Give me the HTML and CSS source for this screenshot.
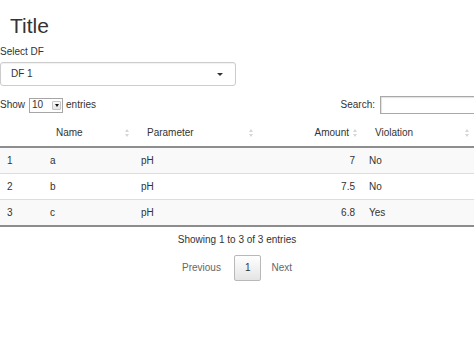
FILE: index.html
```html
<!DOCTYPE html>
<html lang="en">

<head>
	<meta charset="UTF-8">
	<meta name="viewport" content="width=device-width, initial-scale=1.0">
	<title>Title</title>
	<link rel="stylesheet" href="styles.css">
</head>

<body>
	<h2 class="title">Title</h2>

	<div class="form-group">
		<label class="control-label">Select DF</label>
		<div class="selectize">
			<span>DF 1</span>
			<span class="caret"></span>
		</div>
	</div>

	<div class="dt-wrapper">
		<div class="dt-controls">
			<div class="dt-length">
				Show
				<span class="length-select">
					<span class="length-value">10</span>
					<span class="length-arrow"></span>
				</span>
				entries
			</div>
			<div class="dt-filter">
				Search:
				<span class="search-input"></span>
			</div>
		</div>

		<table class="dt-table">
			<colgroup>
				<col class="col-rownum">
				<col class="col-name">
				<col class="col-param">
				<col class="col-amount">
				<col class="col-violation">
			</colgroup>
			<thead>
				<tr>
					<th></th>
					<th class="sorting">Name</th>
					<th class="sorting">Parameter</th>
					<th class="sorting num">Amount</th>
					<th class="sorting">Violation</th>
				</tr>
			</thead>
			<tbody>
				<tr class="odd">
					<td>1</td>
					<td>a</td>
					<td>pH</td>
					<td class="num">7</td>
					<td>No</td>
				</tr>
				<tr class="even">
					<td>2</td>
					<td>b</td>
					<td>pH</td>
					<td class="num">7.5</td>
					<td>No</td>
				</tr>
				<tr class="odd">
					<td>3</td>
					<td>c</td>
					<td>pH</td>
					<td class="num">6.8</td>
					<td>Yes</td>
				</tr>
			</tbody>
		</table>

		<div class="dt-info">Showing 1 to 3 of 3 entries</div>
		<div class="dt-paginate">
			<span class="page-btn disabled prev">Previous</span>
			<span class="page-btn current">1</span>
			<span class="page-btn disabled next">Next</span>
		</div>
	</div>
</body>

</html>
```

FILE: styles.css
```css
:root {
	--text: #333;
	--muted: #666;
	--border: #ccc;
	--row-line: #ddd;
	--stripe: #f9f9f9;
	--sort: #d6d6d6;
}

* {
	box-sizing: border-box;
}

html,
body {
	overflow: hidden;
}

body {
	margin: 0;
	padding: 0;
	font-family: 'Liberation Sans', Arial, sans-serif;
	font-size: 10px;
	line-height: 14px;
	color: var(--text);
	background: white;
}

.title {
	margin: 14px 0 8px 10px;
	font-size: 21px;
	font-weight: 400;
	line-height: 23px;
}

/* select input */
.form-group {
	margin-bottom: 10px;
}

.control-label {
	display: block;
	margin-bottom: 3px;
}

.selectize {
	display: flex;
	align-items: center;
	justify-content: space-between;
	width: 236px;
	height: 24px;
	padding: 0 12px 0 10px;
	border: 1px solid var(--border);
	border-radius: 3px;
	box-shadow: inset 0 1px 1px rgba(0, 0, 0, 0.06);
}

.caret {
	width: 0;
	height: 0;
	border-style: solid;
	border-width: 3.5px 3px 0 3px;
	border-color: #333 transparent transparent transparent;
}

/* table controls */
.dt-controls {
	display: flex;
	align-items: center;
	justify-content: space-between;
	height: 18px;
	margin-right: -20px;
}

.dt-length,
.dt-filter {
	display: flex;
	align-items: center;
	gap: 4px;
}

.dt-length {
	gap: 0;
}

.length-select {
	display: flex;
	align-items: center;
	justify-content: space-between;
	width: 34px;
	height: 15px;
	margin: 0 3px 0 4px;
	padding: 0 1px 0 2px;
	border: 1px solid #a6a6a6;
	background: white;
}

.length-arrow {
	position: relative;
	width: 9px;
	height: 9px;
	border: 1px solid #c4c4c4;
	border-radius: 1px;
	background: linear-gradient(#fafafa, #e4e4e4);
}

.length-arrow::after {
	content: "";
	position: absolute;
	left: 1.5px;
	top: 2.5px;
	border-style: solid;
	border-width: 3px 2.5px 0 2.5px;
	border-color: #111 transparent transparent transparent;
}

.search-input {
	display: block;
	width: 114px;
	height: 18px;
	margin-left: 1px;
	border: 1px solid #a9a9a9;
	border-right: none;
	box-shadow: inset 1px 1px 1px rgba(0, 0, 0, 0.12);
}

/* table */
.dt-table {
	width: 474px;
	margin-top: 5px;
	border-collapse: collapse;
	table-layout: fixed;
	border-bottom: 2px solid #8d8d8d;
}

.col-rownum {
	width: 43px;
}

.col-name {
	width: 91px;
}

.col-param {
	width: 124px;
}

.col-amount {
	width: 104px;
}

.col-violation {
	width: 112px;
}

.dt-table th {
	position: relative;
	padding: 7px 13px 6px 13px;
	font-weight: 400;
	text-align: left;
	border-bottom: 2px solid #8d8d8d;
}

.dt-table th.num,
.dt-table td.num {
	text-align: right;
}

.dt-table th.sorting::before,
.dt-table th.sorting::after {
	content: "";
	position: absolute;
	right: 5px;
	border-style: solid;
	border-color: transparent;
}

.dt-table th.sorting::before {
	top: 10px;
	border-width: 0 2.5px 3.5px 2.5px;
	border-bottom-color: var(--sort);
}

.dt-table th.sorting::after {
	top: 15px;
	border-width: 3.5px 2.5px 0 2.5px;
	border-top-color: var(--sort);
}

.dt-table td {
	padding: 6px 7px 5px 7px;
	border-top: 1px solid var(--row-line);
}

.dt-table tbody tr:first-child td {
	border-top: none;
}

.dt-table tr.odd {
	background-color: var(--stripe);
}

/* info + paging */
.dt-info {
	padding-top: 6px;
	text-align: center;
}

.dt-paginate {
	display: flex;
	justify-content: center;
	align-items: center;
	margin-top: 8px;
}

.page-btn {
	padding: 5px 10px;
	border: 1px solid transparent;
	border-radius: 2px;
}

.page-btn.disabled {
	color: var(--muted);
}

.page-btn.prev {
	padding-right: 12px;
}

.page-btn.next {
	padding-left: 9px;
}

.page-btn.current {
	padding: 5px 10px;
	color: var(--text);
	border-color: #b9b9b9;
	background: linear-gradient(#ffffff, #e4e4e4);
}
```
